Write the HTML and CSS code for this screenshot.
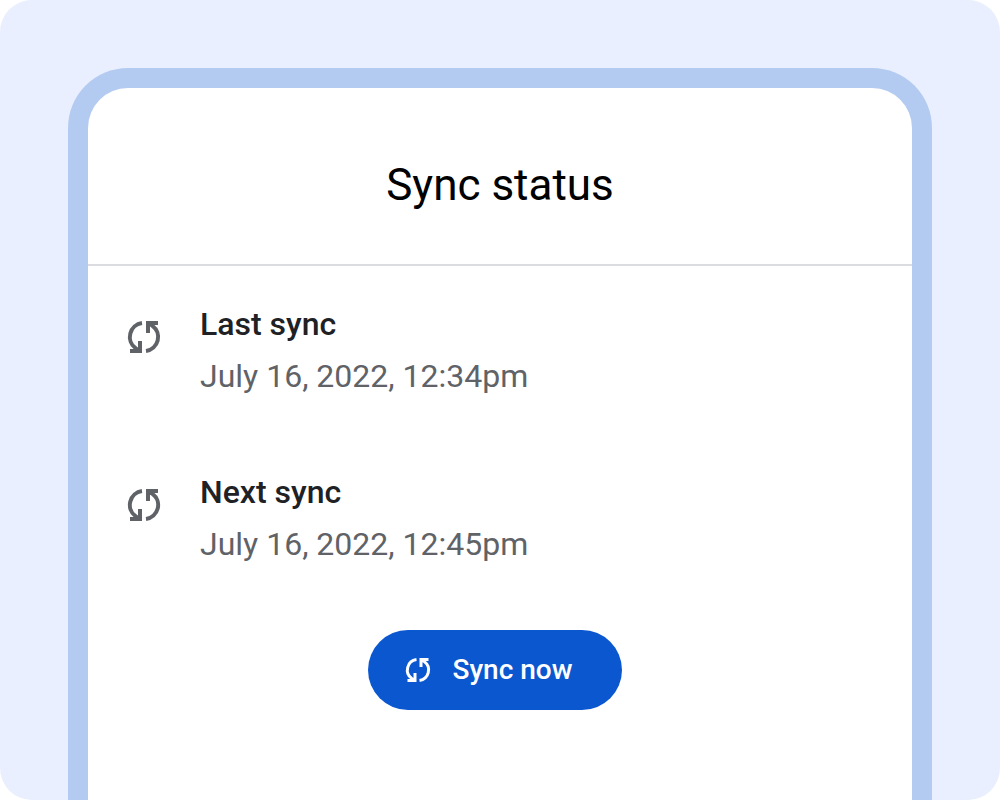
FILE: index.html
```html
<!DOCTYPE html>
<html lang="en">
<head>
<meta charset="utf-8">
<meta name="viewport" content="width=device-width, initial-scale=1">
<title>Sync status</title>
<link rel="stylesheet" href="styles.css">
</head>
<body>
<svg class="defs" aria-hidden="true">
  <symbol id="sync" viewBox="0 0 40 40">
    <path d="M18 6.1A14 14 0 0 0 11.5 31.2L14 33M6 34H16V24M22 33.9A14 14 0 0 0 28.5 8.8L26 7M34 6H24V16" fill="none" stroke="currentColor" stroke-width="4"/>
  </symbol>
</svg>
<div class="stage">
  <main class="device">
    <header class="header"><h1 class="title">Sync status</h1></header>
    <ul class="list">
      <li class="item">
        <svg class="item-icon" aria-hidden="true"><use href="#sync"/></svg>
        <div class="item-text">
          <h2 class="label">Last sync</h2>
          <p class="date">July 16, 2022, 12:34pm</p>
        </div>
      </li>
      <li class="item">
        <svg class="item-icon" aria-hidden="true"><use href="#sync"/></svg>
        <div class="item-text">
          <h2 class="label">Next sync</h2>
          <p class="date">July 16, 2022, 12:45pm</p>
        </div>
      </li>
    </ul>
    <div class="actions">
      <button class="sync-button" type="button">
        <svg class="button-icon" aria-hidden="true"><use href="#sync"/></svg>
        Sync now
      </button>
    </div>
  </main>
</div>
</body>
</html>
```

FILE: styles.css
```css
* {
  box-sizing: border-box;
}

body {
  margin: 0;
  background: #fff;
  font-family: Roboto, "Liberation Sans", sans-serif;
}

h1, h2, p, ul {
  margin: 0;
  padding: 0;
}

.defs {
  display: none;
}

.stage {
  display: flex;
  min-height: 100vh;
  padding: 68px 68px 0;
  border-radius: 32px;
  background: #e9effe;
}

.device {
  flex: 1;
  border: 20px solid #b4cbf1;
  border-bottom: 0;
  border-radius: 60px 60px 0 0;
  background: #fff;
}

.header {
  padding: 64px 40px 46px;
  border-bottom: 2px solid #dadce0;
  text-align: center;
}

.title {
  color: #000;
  font-size: 44px;
  font-weight: 400;
  line-height: 66px;
}

.list {
  display: grid;
  gap: 64px;
  padding: 32px 36px 0;
  list-style: none;
}

.item {
  display: flex;
  align-items: flex-start;
  gap: 36px;
}

.item-icon {
  flex: none;
  width: 40px;
  height: 40px;
  margin-top: 19px;
  color: #5f6368;
}

.label,
.date {
  font-size: 32px;
  line-height: 52px;
}

.label {
  color: #202124;
  font-weight: 500;
}

.date {
  color: #5f6368;
}

.actions {
  display: flex;
  justify-content: center;
  padding: 60px 40px 40px 30px;
}

.sync-button {
  display: flex;
  align-items: center;
  gap: 19px;
  height: 80px;
  padding: 0 49px 0 35px;
  border: 0;
  border-radius: 40px;
  background: #0b57d0;
  color: #fff;
  font: 500 28px/42px Roboto, "Liberation Sans", sans-serif;
}

.button-icon {
  width: 30px;
  height: 30px;
}
```
